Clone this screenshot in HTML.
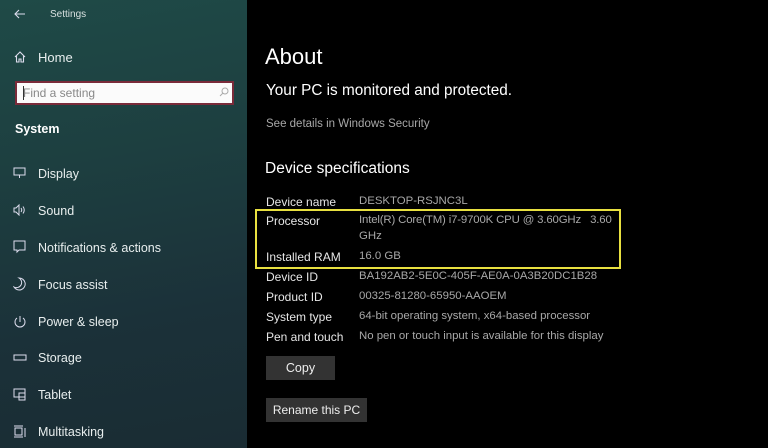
<!DOCTYPE html>
<html><head><style>
*{margin:0;padding:0;box-sizing:border-box}
body{width:768px;height:448px;overflow:hidden;background:#000;font-family:"Liberation Sans",sans-serif;position:relative}
#side{position:absolute;left:0;top:0;width:247px;height:448px;background:linear-gradient(170deg,#1f4a47 0%,#1d3f40 35%,#1b3139 70%,#1a2c33 100%)}
.t{position:absolute;white-space:nowrap}
.nav{position:absolute;left:38px;color:#e8eeee;font-size:12.5px}
.ic{position:absolute;left:13px}
.lbl{position:absolute;left:266px;color:#e6e6e6;font-size:12px}
.val{position:absolute;left:359px;color:#a8a8a8;font-size:11.4px}
.btn{position:absolute;background:#333;color:#eee;font-size:12.5px;text-align:center;line-height:24px}
</style></head><body>
<div id="side">
<svg style="position:absolute;left:14px;top:9px" width="12" height="10"><path d="M11 5 H1 M5 1 L1 5 L5 9" fill="none" stroke="#dde" stroke-width="1.1"/></svg>
<div class="t" style="left:50px;top:9px;color:#d8e0e0;font-size:10px">Settings</div>
<svg class="ic" style="top:50px" width="14" height="14" viewBox="0 0 14 14"><path d="M2 7 L7 2 L12 7 M3.5 6 V12 H6 V9 H8 V12 H10.5 V6" fill="none" stroke="#dde" stroke-width="1.1"/></svg>
<div class="nav" style="top:50px;font-size:13px">Home</div>
<div style="position:absolute;left:15px;top:81px;width:219px;height:24px;background:#fbfbfb;border:2px solid #7a2b3a"></div>
<div class="t" style="left:23px;top:86px;color:#888;font-size:12px">Find a setting</div>
<div style="position:absolute;left:23px;top:86px;width:1px;height:14px;background:#333"></div>
<svg style="position:absolute;left:219px;top:87px" width="10" height="10"><circle cx="6" cy="4" r="3" fill="none" stroke="#aaa"/><line x1="4" y1="6" x2="1" y2="9" stroke="#aaa"/></svg>
<div class="t" style="left:15px;top:122px;color:#fff;font-size:12.5px;font-weight:bold">System</div>
<svg class="ic" style="top:167px" width="14" height="12"><rect x="1" y="1" width="11" height="7" fill="none" stroke="#dde"/><line x1="6.5" y1="8" x2="6.5" y2="11" stroke="#dde"/></svg>
<div class="nav" style="top:167px">Display</div>
<svg class="ic" style="top:204px" width="14" height="12"><path d="M1 4 H3 L6 1 V11 L3 8 H1 Z" fill="none" stroke="#dde"/><path d="M8 4 Q9.5 6 8 8 M10 2.5 Q12.5 6 10 9.5" fill="none" stroke="#dde"/></svg>
<div class="nav" style="top:204px">Sound</div>
<svg class="ic" style="top:240px" width="14" height="14"><path d="M1 1 H12 V10 H6 L4 12 V10 H1 Z" fill="none" stroke="#dde"/></svg>
<div class="nav" style="top:241px">Notifications &amp; actions</div>
<svg class="ic" style="top:277px" width="14" height="14"><path d="M6 1 A6 6 0 1 1 1 10 A5 5 0 0 0 6 1 Z" fill="none" stroke="#dde"/></svg>
<div class="nav" style="top:278px">Focus assist</div>
<svg class="ic" style="top:315px" width="14" height="14"><path d="M4 3 A5 5 0 1 0 10 3" fill="none" stroke="#dde"/><line x1="7" y1="1" x2="7" y2="7" stroke="#dde"/></svg>
<div class="nav" style="top:315px">Power &amp; sleep</div>
<svg class="ic" style="top:354px" width="14" height="8"><rect x="1" y="1" width="12" height="5" fill="none" stroke="#dde"/></svg>
<div class="nav" style="top:351px">Storage</div>
<svg class="ic" style="top:388px" width="14" height="14"><rect x="1" y="1" width="11" height="8" fill="none" stroke="#dde"/><rect x="6" y="5" width="6" height="7" fill="none" stroke="#dde"/></svg>
<div class="nav" style="top:388px">Tablet</div>
<svg class="ic" style="top:425px" width="14" height="14"><rect x="2" y="3" width="7" height="7" fill="none" stroke="#dde"/><line x1="1" y1="1" x2="10" y2="1" stroke="#dde"/><line x1="1" y1="12" x2="10" y2="12" stroke="#dde"/><line x1="12" y1="3" x2="12" y2="12" stroke="#dde"/></svg>
<div class="nav" style="top:425px">Multitasking</div>
</div>
<div id="main">
<div class="t" style="left:265px;top:44px;font-size:22px;color:#fff">About</div>
<div class="t" style="left:266px;top:82px;font-size:15.3px;color:#fff">Your PC is monitored and protected.</div>
<div class="t" style="left:266px;top:118px;font-size:11.5px;color:#a8a8a8">See details in Windows Security</div>
<div class="t" style="left:265px;top:160px;font-size:15.5px;color:#fff">Device specifications</div>
<div class="lbl" style="top:195px">Device name</div><div class="val" style="top:195px">DESKTOP-RSJNC3L</div>
<div class="lbl" style="top:214px">Processor</div><div class="val" style="top:214px;letter-spacing:-0.15px">Intel(R) Core(TM) i7-9700K CPU @ 3.60GHz&nbsp;&nbsp;&nbsp;3.60</div>
<div class="val" style="top:230px">GHz</div>
<div class="lbl" style="top:250px">Installed RAM</div><div class="val" style="top:250px">16.0 GB</div>
<div style="position:absolute;left:255px;top:209px;width:366px;height:60px;border:2px solid #e8e040"></div>
<div class="lbl" style="top:270px">Device ID</div><div class="val" style="top:270px">BA192AB2-5E0C-405F-AE0A-0A3B20DC1B28</div>
<div class="lbl" style="top:290px">Product ID</div><div class="val" style="top:290px">00325-81280-65950-AAOEM</div>
<div class="lbl" style="top:310px">System type</div><div class="val" style="top:310px">64-bit operating system, x64-based processor</div>
<div class="lbl" style="top:330px">Pen and touch</div><div class="val" style="top:330px">No pen or touch input is available for this display</div>
<div class="btn" style="left:266px;top:356px;width:69px;height:24px">Copy</div>
<div class="btn" style="left:266px;top:398px;width:101px;height:24px;font-size:12px">Rename this PC</div>
</div>
</body></html>
